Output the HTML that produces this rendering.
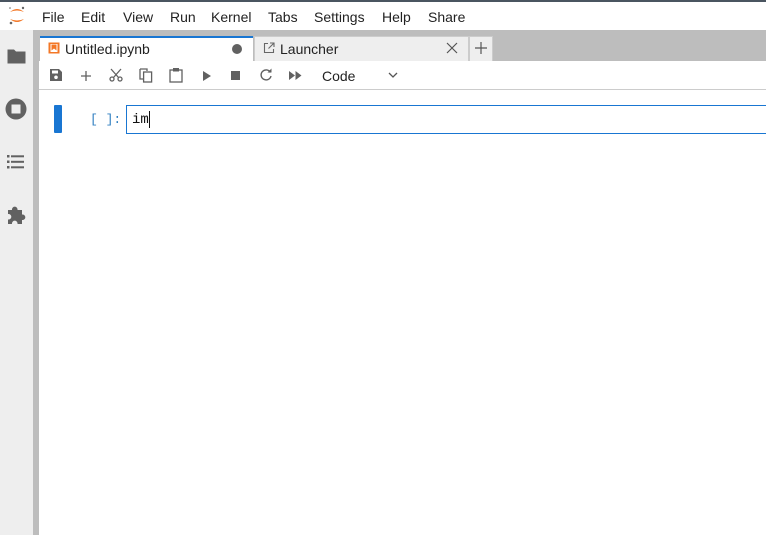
<!DOCTYPE html>
<html><head><style>
*{margin:0;padding:0;box-sizing:border-box}
body{width:766px;height:535px;overflow:hidden;background:#fff;font-family:"Liberation Sans",sans-serif;position:relative}
.a{position:absolute}
.menu span{position:absolute;top:9px;font-size:14px;color:#222}
.ic{fill:#616161}
</style></head><body>
<div class="a" style="left:0;top:0;width:766px;height:2px;background:#4a5560"></div>
<svg class="a" style="left:6px;top:4px" width="22" height="22" viewBox="0 0 22 22">
<path d="M4 8 Q11 2 18 8 Q11 5 4 8Z" fill="#f37726"/><path d="M4 15 Q11 21 18 15 Q11 18 4 15Z" fill="#f37726"/>
<circle cx="17" cy="4" r="1.2" fill="#666"/><circle cx="5" cy="19" r="1.3" fill="#666"/><circle cx="4" cy="4" r=".8" fill="#666"/></svg>
<div class="menu">
<span style="left:42px">File</span><span style="left:81px">Edit</span><span style="left:123px">View</span><span style="left:170px">Run</span><span style="left:211px">Kernel</span><span style="left:268px">Tabs</span><span style="left:314px">Settings</span><span style="left:382px">Help</span><span style="left:428px">Share</span>
</div>
<div class="a" style="left:0;top:30px;width:33px;height:505px;background:#eee"></div>
<div class="a" style="left:33px;top:30px;width:733px;height:31px;background:#bdbdbd"></div>
<div class="a" style="left:33px;top:30px;width:6px;height:505px;background:#bdbdbd"></div>
<svg class="a" style="left:7px;top:48px" width="19" height="16"><path class="ic" d="M0.5 1.5h6.5l2 2h9.5v12H0.5z"/></svg>
<svg class="a" style="left:5px;top:98px" width="22" height="22"><circle cx="11" cy="11" r="10.5" fill="#616161"/><rect x="6.5" y="6.5" width="9" height="9" fill="#eee"/></svg>
<svg class="a" style="left:7px;top:154px" width="18" height="16"><g fill="#616161"><rect x="0" y="1" width="2.5" height="2.5"/><rect x="4" y="1.3" width="13" height="2"/><rect x="0" y="6.5" width="2.5" height="2.5"/><rect x="4" y="6.8" width="13" height="2"/><rect x="0" y="12" width="2.5" height="2.5"/><rect x="4" y="12.3" width="13" height="2"/></g></svg>
<svg class="a" style="left:6px;top:205px" width="20" height="20"><path class="ic" d="M2 5h4a2.8 2.8 0 1 1 5.5 0h4.5v4.5a2.8 2.8 0 1 1 0 5.5v4h-4.5a2.8 2.8 0 1 0-5.5 0H2v-4.5a2.8 2.8 0 1 0 0-5.5z"/></svg>
<div class="a" style="left:40px;top:36px;width:213px;height:26px;background:#fff;border-top:2px solid #1976d2"></div>
<svg class="a" style="left:48px;top:42px" width="12" height="12"><rect x=".5" y=".5" width="11" height="11" fill="#f37726"/><rect x="2.5" y="2" width="7" height="8" fill="#fff"/><path d="M3.5 2.5h5v6l-2.5-2-2.5 2z" fill="#f37726"/></svg>
<div class="a" style="left:65px;top:41px;font-size:14px;color:#222">Untitled.ipynb</div>
<div class="a" style="left:232px;top:44px;width:10px;height:10px;border-radius:50%;background:#616161"></div>
<div class="a" style="left:254px;top:36px;width:215px;height:25px;background:#eee;border:1px solid #ccc;border-bottom:none"></div>
<svg class="a" style="left:263px;top:42px" width="12" height="12"><path d="M5 1.5H1.5v9h9V7M7 1h4v4M11 1 5.5 6.5" fill="none" stroke="#666" stroke-width="1.1"/></svg>
<div class="a" style="left:280px;top:41px;font-size:14px;color:#222">Launcher</div>
<svg class="a" style="left:446px;top:42px" width="12" height="12"><path d="M1 1l10 10M11 1 1 11" stroke="#555" stroke-width="1.2"/></svg>
<div class="a" style="left:469px;top:36px;width:24px;height:25px;background:#eee;border:1px solid #ccc;border-bottom:none"></div>
<svg class="a" style="left:475px;top:42px" width="12" height="12"><path d="M6 0v12M0 6h12" stroke="#555" stroke-width="1.2"/></svg>
<div class="a" style="left:39px;top:89px;width:727px;height:1px;background:#ccc"></div>
<svg class="a" style="left:50px;top:69px" width="12" height="12"><path class="ic" d="M0 0h9l3 3v9H0z"/><rect x="2" y="1.5" width="6" height="3" fill="#fff"/><circle cx="6" cy="8.3" r="1.8" fill="#fff"/></svg>
<svg class="a" style="left:80px;top:70px" width="12" height="12"><path d="M6 1v10M1 6h10" stroke="#616161" stroke-width="1.3"/></svg>
<svg class="a" style="left:109px;top:68px" width="14" height="14"><circle cx="3" cy="11" r="2" fill="none" stroke="#616161" stroke-width="1.3"/><circle cx="11" cy="11" r="2" fill="none" stroke="#616161" stroke-width="1.3"/><path d="M4.5 9.5 12 1M9.5 9.5 2 1" stroke="#616161" stroke-width="1.3"/></svg>
<svg class="a" style="left:139px;top:68px" width="14" height="15"><path d="M1 1h7v2M1 1v10h3" fill="none" stroke="#616161" stroke-width="1.3"/><rect x="4.6" y="4" width="8" height="10" fill="none" stroke="#616161" stroke-width="1.3"/></svg>
<svg class="a" style="left:169px;top:67px" width="14" height="16"><rect x="1" y="3" width="12" height="12" fill="none" stroke="#616161" stroke-width="1.3"/><rect x="4" y="1" width="6" height="3.5" fill="#616161"/></svg>
<svg class="a" style="left:202px;top:70px" width="10" height="12"><path d="M1 1l8 5-8 5z" fill="#616161"/></svg>
<div class="a" style="left:231px;top:71px;width:9px;height:9px;background:#616161"></div>
<svg class="a" style="left:259px;top:68px" width="14" height="14"><path d="M11.5 4.5A5 5 0 1 0 12 8" fill="none" stroke="#616161" stroke-width="1.4"/><path d="M8.5 4.5h4v-4z" fill="#616161"/></svg>
<svg class="a" style="left:289px;top:70px" width="14" height="11"><path d="M0 1l6 4.5-6 4.5zM6.5 1l6 4.5-6 4.5z" fill="#616161"/></svg>
<div class="a" style="left:322px;top:68px;font-size:14px;color:#222">Code</div>
<svg class="a" style="left:388px;top:72px" width="10" height="7"><path d="M1 1l4 4 4-4" fill="none" stroke="#555" stroke-width="1.3"/></svg>
<div class="a" style="left:54px;top:105px;width:8px;height:28px;background:#1976d2;border-radius:1px"></div>
<div class="a" style="left:90px;top:112px;font-family:'Liberation Mono',monospace;font-size:13px;color:#307fc1">[ ]:</div>
<div class="a" style="left:126px;top:105px;width:645px;height:29px;border:1px solid #1976d2;background:#fff"></div>
<div class="a" style="left:132px;top:112px;font-family:'Liberation Mono',monospace;font-size:14px;color:#111">im</div>
<div class="a" style="left:149px;top:111px;width:1px;height:17px;background:#111"></div>
</body></html>
